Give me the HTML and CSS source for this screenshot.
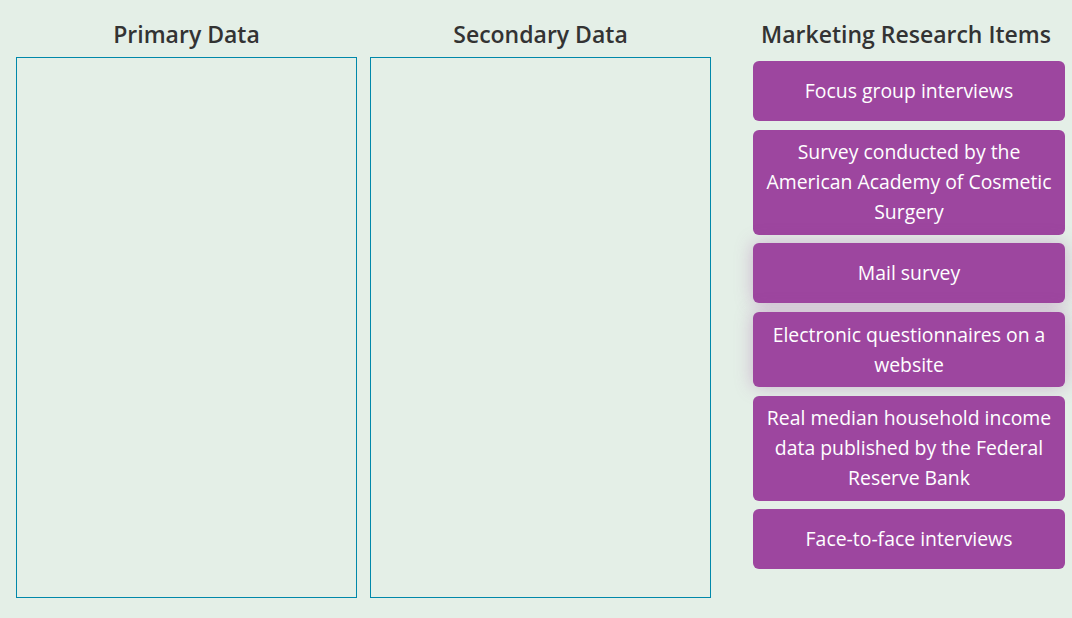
FILE: index.html
```html
<!DOCTYPE html>
<html>
<head>
<meta charset="utf-8">
<link rel="stylesheet" href="styles.css">
</head>
<body>
<div class="page">
  <section class="col col-zone">
    <h2 class="heading">Primary Data</h2>
    <div class="dropzone"></div>
  </section>
  <section class="col col-zone">
    <h2 class="heading">Secondary Data</h2>
    <div class="dropzone"></div>
  </section>
  <section class="col col-items">
    <h2 class="heading">Marketing Research Items</h2>
    <div class="items">
      <div class="item">Focus group interviews</div>
      <div class="item">Survey conducted by the American Academy of Cosmetic Surgery</div>
      <div class="item item-glow">Mail survey</div>
      <div class="item item-glow">Electronic questionnaires on a website</div>
      <div class="item">Real median household income data published by the Federal Reserve Bank</div>
      <div class="item">Face-to-face interviews</div>
    </div>
  </section>
</div>
</body>
</html>
```
FILE: styles.css
```css
html, body {
  margin: 0;
  padding: 0;
  background: #e4efe7;
}
body {
  font-family: "Open Sans", "Noto Sans", sans-serif;
  color: #333;
  width: 1072px;
  height: 618px;
  overflow: hidden;
}
.page {
  display: flex;
  padding: 18px 7px 0 16px;
  align-items: flex-start;
}
.col {
  display: flex;
  flex-direction: column;
}
.col-zone {
  width: 341px;
  margin-right: 13px;
}
.col-zone + .col-zone {
  margin-right: 42px;
}
.col-items {
  width: 312px;
}
.heading {
  margin: 0;
  font-size: 23px;
  font-weight: 600;
  line-height: 33px;
  text-align: center;
  color: #333;
  height: 39px;
}
.col-items .heading {
  margin-left: -6px;
}
.dropzone {
  height: 539px;
  border: 1px solid #0088aa;
  box-sizing: content-box;
}
.items {
  display: flex;
  flex-direction: column;
  gap: 8.7px;
  margin-top: 4px;
}
.item {
  background: #9d469f;
  color: #fff;
  border-radius: 6px;
  font-size: 19.4px;
  line-height: 30px;
  text-align: center;
  min-height: 60px;
  box-sizing: border-box;
  padding: 7.5px 8px;
  display: flex;
  align-items: center;
  justify-content: center;
}
.item-glow {
  box-shadow: 0 0 18px rgba(157, 70, 159, 0.35);
}
```
